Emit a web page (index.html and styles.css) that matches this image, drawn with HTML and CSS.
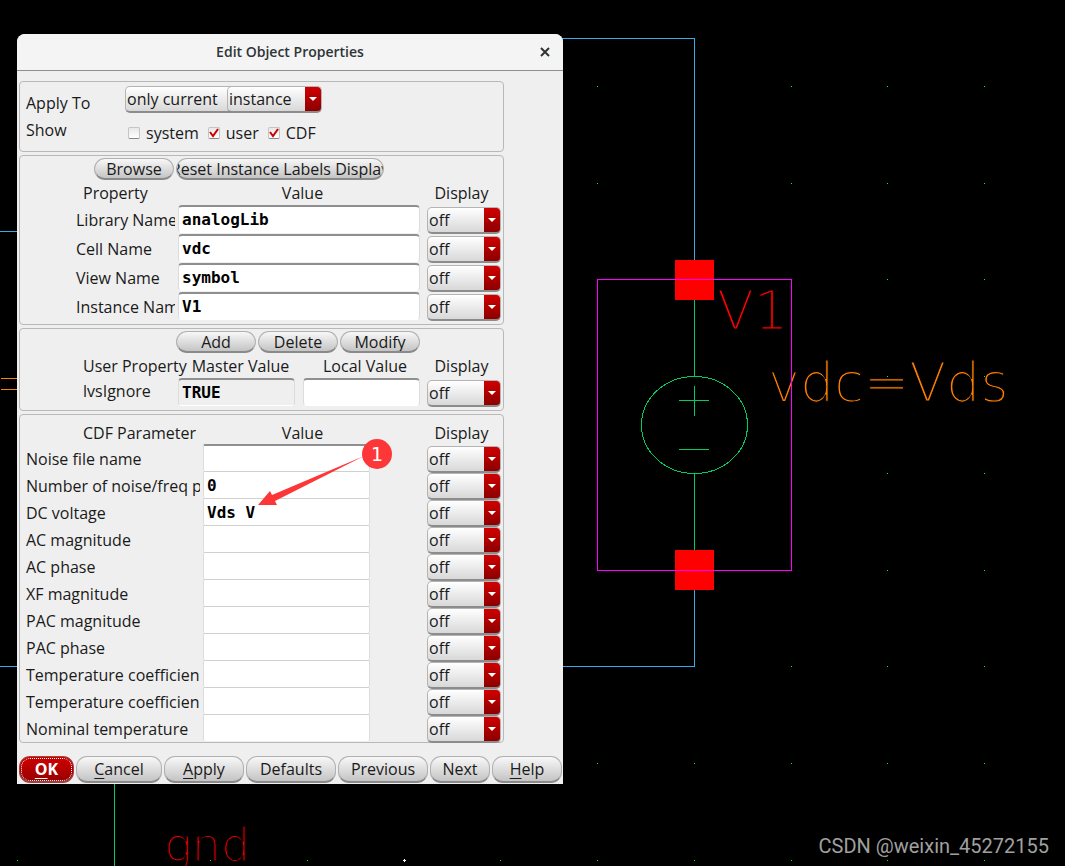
FILE: index.html
```html
<!DOCTYPE html>
<html lang="en">
<head>
    <meta charset="UTF-8">
    <meta name="viewport" content="width=device-width, initial-scale=1.0">
    <title>Edit Object Properties</title>
    <link rel="stylesheet" href="styles.css">
</head>
<body>
<!-- Schematic canvas -->
<svg class="schematic" shape-rendering="crispEdges">
    <defs>
        <g id="dots" class="dot">
            <rect x="597" width="1" height="1"/>
            <rect x="694" width="1" height="1"/>
            <rect x="791" width="1" height="1"/>
            <rect x="887" width="1" height="1"/>
            <rect x="984" width="1" height="1"/>
        </g>
    </defs>
    <text class="net" x="717" y="329">V1</text>
    <text class="net param" x="768" y="401">vdc=Vds</text>
    <text class="net ground" x="164" y="861">gnd</text>

    <use href="#dots" y="86"/>
    <use href="#dots" y="183"/>
    <use href="#dots" y="279"/>
    <use href="#dots" y="376"/>
    <use href="#dots" y="473"/>
    <use href="#dots" y="570"/>
    <use href="#dots" y="666"/>
    <use href="#dots" y="763"/>
    <use href="#dots" y="860"/>
    <g class="dot">
        <rect x="17" y="860" width="1" height="1"/>
        <rect x="210" y="860" width="1" height="1"/>
        <rect x="307" y="860" width="1" height="1"/>
        <rect x="500" y="860" width="1" height="1"/>
    </g>
    <path class="origin" d="M403 860.5h3M404.5 859v3"/>

    <path class="wire" d="M560 38.5H694.5V260M694.5 590V666.5H560M0 231.5H20M0 666.5H20"/>
    <path class="param-line" d="M1 378.5H20M1 389.5H20"/>
    <path class="symbol" d="M114.5 780V866"/>

    <rect class="pin" x="675" y="260" width="39" height="40"/>
    <rect class="pin" x="675" y="550" width="39" height="40"/>
    <path class="symbol" d="M694.5 300V376M694.5 473V550M679 400.5H709M694.5 386V416M679 449.5H709"/>
    <ellipse class="symbol" cx="694.5" cy="425" rx="53" ry="48.5"/>
    <rect class="selection" x="597.5" y="279.5" width="194" height="291"/>
</svg>

<main class="dialog">
    <header class="titlebar">
        <h1>Edit Object Properties</h1>
        <button class="close" type="button" aria-label="Close">
            <svg width="10" height="10" viewBox="0 0 10 10"><path d="M1 1l8 8M9 1l-8 8"/></svg>
        </button>
    </header>

    <form class="content">
        <section class="group apply">
            <label for="applyTo">Apply To</label>
            <div class="scope">
                <select id="applyTo" class="plain"><option>only current</option></select>
                <select class="kind" aria-label="Object kind"><option>instance</option></select>
            </div>
            <span>Show</span>
            <div class="checks">
                <label><input type="checkbox">system</label>
                <label><input type="checkbox" checked>user</label>
                <label><input type="checkbox" checked>CDF</label>
            </div>
        </section>

        <section class="group">
            <div class="tools browse">
                <button type="button"><span>Browse</span></button>
                <button type="button" class="reset"><span>Reset Instance Labels Display</span></button>
            </div>
            <div class="row head"><span>Property</span><span>Value</span><span>Display</span></div>
            <div class="row">
                <label for="lib">Library Name</label>
                <input id="lib" type="text" value="analogLib">
                <select aria-label="Library Name display"><option>off</option></select>
            </div>
            <div class="row">
                <label for="cell">Cell Name</label>
                <input id="cell" type="text" value="vdc">
                <select aria-label="Cell Name display"><option>off</option></select>
            </div>
            <div class="row">
                <label for="view">View Name</label>
                <input id="view" type="text" value="symbol">
                <select aria-label="View Name display"><option>off</option></select>
            </div>
            <div class="row">
                <label for="inst">Instance Name</label>
                <input id="inst" type="text" value="V1">
                <select aria-label="Instance Name display"><option>off</option></select>
            </div>
        </section>

        <section class="group">
            <div class="tools edit">
                <button type="button"><span>Add</span></button>
                <button type="button"><span>Delete</span></button>
                <button type="button"><span>Modify</span></button>
            </div>
            <div class="row user head"><span>User Property</span><span>Master Value</span><span>Local Value</span><span>Display</span></div>
            <div class="row user">
                <label for="lvs">lvsIgnore</label>
                <input id="lvs" type="text" value="TRUE" readonly>
                <input type="text" aria-label="lvsIgnore local value">
                <select aria-label="lvsIgnore display"><option>off</option></select>
            </div>
        </section>

        <section class="group params">
            <div class="row head"><span>CDF Parameter</span><span>Value</span><span>Display</span></div>
            <div class="row cdf">
                <label for="p1">Noise file name</label>
                <input id="p1" type="text">
                <select aria-label="Display"><option>off</option></select>
            </div>
            <div class="row cdf">
                <label for="p2">Number of noise/freq p</label>
                <input id="p2" type="text" value="0">
                <select aria-label="Display"><option>off</option></select>
            </div>
            <div class="row cdf">
                <label for="p3">DC voltage</label>
                <input id="p3" type="text" value="Vds V">
                <select aria-label="Display"><option>off</option></select>
            </div>
            <div class="row cdf">
                <label for="p4">AC magnitude</label>
                <input id="p4" type="text">
                <select aria-label="Display"><option>off</option></select>
            </div>
            <div class="row cdf">
                <label for="p5">AC phase</label>
                <input id="p5" type="text">
                <select aria-label="Display"><option>off</option></select>
            </div>
            <div class="row cdf">
                <label for="p6">XF magnitude</label>
                <input id="p6" type="text">
                <select aria-label="Display"><option>off</option></select>
            </div>
            <div class="row cdf">
                <label for="p7">PAC magnitude</label>
                <input id="p7" type="text">
                <select aria-label="Display"><option>off</option></select>
            </div>
            <div class="row cdf">
                <label for="p8">PAC phase</label>
                <input id="p8" type="text">
                <select aria-label="Display"><option>off</option></select>
            </div>
            <div class="row cdf">
                <label for="p9">Temperature coefficien</label>
                <input id="p9" type="text">
                <select aria-label="Display"><option>off</option></select>
            </div>
            <div class="row cdf">
                <label for="p10">Temperature coefficien</label>
                <input id="p10" type="text">
                <select aria-label="Display"><option>off</option></select>
            </div>
            <div class="row cdf">
                <label for="p11">Nominal temperature</label>
                <input id="p11" type="text">
                <select aria-label="Display"><option>off</option></select>
            </div>
        </section>
    </form>

    <footer class="actions">
        <button type="button" class="ok"><span><u>O</u>K</span></button>
        <button type="button" class="cancel"><span><u>C</u>ancel</span></button>
        <button type="button"><span><u>A</u>pply</span></button>
        <button type="button" class="wide"><span>Defaults</span></button>
        <button type="button" class="wide"><span>Previous</span></button>
        <button type="button" class="next"><span>Next</span></button>
        <button type="button" class="help"><span><u>H</u>elp</span></button>
    </footer>
</main>

<!-- Callout on the DC voltage field -->
<svg class="callout" width="134" height="68" viewBox="258 438 134 68">
    <polygon points="258,505 270,491 272,495 364,456 275,501 277,505"/>
    <circle cx="377" cy="454" r="15"/>
    <text x="377" y="461">1</text>
</svg>

<p class="watermark">CSDN @weixin_45272155</p>
</body>
</html>
```
FILE: styles.css
```css
* {
    box-sizing: border-box;
}

body {
    position: relative;
    min-height: 100vh;
    margin: 0;
    padding: 34px 17px 0;
    background: #000;
    color: #1a1a1a;
    font-family: 'Open Sans', 'Noto Sans', sans-serif;
    font-size: 16px;
    line-height: 22px;
    overflow: hidden;
}

button, select, input {
    font: inherit;
    color: inherit;
    margin: 0;
}

/* Schematic */
.schematic {
    position: absolute;
    top: 0;
    left: 0;
    width: 100%;
    height: 100%;
}

.dot {
    fill: #00ff00;
}

.origin {
    stroke: #fff;
}

.wire, .symbol, .selection, .param-line {
    fill: none;
    stroke-width: 1;
}

.wire {
    stroke: #33aaee;
}

.symbol {
    stroke: #00cc66;
}

.selection {
    stroke: #ff00ff;
}

.param-line {
    stroke: #ff8000;
}

.pin {
    fill: #ff0000;
}

/* background-coloured stroke thins the letters */
.net {
    fill: #ff0000;
    stroke: #000;
    stroke-width: 1px;
    font-family: 'DejaVu Sans Light', 'DejaVu Sans', sans-serif;
    font-size: 54px;
    font-weight: 200;
}

.param {
    fill: #ff8000;
}

.ground {
    font-size: 46px;
}

/* Dialog window */
.dialog {
    position: relative;
    width: fit-content;
    background: #efefef;
    border-radius: 8px 8px 0 0;
    overflow: hidden;
}

.titlebar {
    display: grid;
    grid-template-columns: 36px 1fr 36px;
    align-items: center;
    height: 37px;
    background: #f4f4f4;
    border-bottom: 1px solid #8f8f88;
}

.titlebar h1 {
    grid-column: 2;
    margin: 0;
    font-size: 14px;
    font-weight: 600;
    color: #2e3436;
    text-align: center;
}

.close {
    display: flex;
    justify-content: center;
    padding: 0;
    border: none;
    background: none;
}

.close path {
    stroke: #2e3436;
    stroke-width: 2;
}

/* the button bar sets the window width */
.content {
    contain: inline-size;
    display: flex;
    flex-direction: column;
    gap: 3px;
    padding: 10px 59px 13px 2px;
}

.group {
    padding: 2px 2px 3px 0;
    border: 1px solid #b8b8b8;
    border-radius: 4px;
}

.params {
    padding: 7px 2px 1px 0;
}

.apply {
    display: grid;
    grid-template-columns: 99px 1fr;
    row-gap: 5px;
    padding: 4px 6px 7px;
}

.apply > label {
    padding-top: 6px;
}

.scope, .checks {
    display: flex;
}

.checks {
    gap: 9px;
    padding: 3px 0 0 3px;
}

.checks label {
    display: flex;
    align-items: center;
    gap: 6px;
}

input[type="checkbox"] {
    appearance: none;
    width: 12px;
    height: 12px;
    border: 1px solid #c4c4c4;
    border-bottom-color: #888;
    border-radius: 2px;
    background: linear-gradient(#e8e8e8, #fff);
}

input[type="checkbox"]:checked {
    background: url("data:image/svg+xml,%3Csvg xmlns='http://www.w3.org/2000/svg' viewBox='0 0 10 10'%3E%3Cpath d='M1 4l3 4 5-7' fill='none' stroke='%23cc0000' stroke-width='2'/%3E%3C/svg%3E") center / 10px no-repeat, linear-gradient(#e8e8e8, #fff);
}

select {
    appearance: none;
    width: 74px;
    height: 27px;
    padding: 0 0 0 1px;
    border: 1px solid #b4b4b4;
    border-bottom: 2px solid #8c8c8c;
    border-radius: 5px;
    background:
        url("data:image/svg+xml,%3Csvg xmlns='http://www.w3.org/2000/svg' viewBox='0 0 8 4'%3E%3Cpath d='M0 0h8L4 4z' fill='%23fff'/%3E%3C/svg%3E") right 4px center / 8px 4px no-repeat,
        linear-gradient(#d00000, #8c0000) right / 16px 100% no-repeat,
        linear-gradient(#fff, #d8d8d8);
}

.scope .plain {
    width: 124px;
    background: linear-gradient(#fff, #d8d8d8);
}

.scope .kind {
    width: 95px;
    margin-left: -22px;
}

input[type="text"] {
    min-width: 0;
    height: 28px;
    margin-right: 7px;
    padding: 0 3px;
    border: 1px solid #dcdcdc;
    border-top: 2px solid #8f8f8f;
    border-bottom-color: #fff;
    border-radius: 4px;
    background: #fff;
    color: #000;
    font-family: 'DejaVu Sans Mono', monospace;
    font-weight: bold;
}

input[readonly] {
    background: #efefef;
}

/* Property rows */
.row {
    display: grid;
    grid-template-columns: 158px 1fr 74px;
    height: 29px;
}

.row label {
    margin-right: 3px;
    padding: 4px 0 0 56px;
    white-space: nowrap;
    overflow: hidden;
}

.row select {
    margin-top: 2px;
}

.user {
    grid-template-columns: 158px 125px 1fr 74px;
}

.user label {
    padding: 2px 0 0 63px;
}

.user input[type="text"]:nth-of-type(1) {
    margin-right: 8px;
}

.cdf {
    grid-template-columns: 183px 1fr 74px;
    height: 27px;
}

.cdf label {
    padding: 4px 0 0 6px;
}

.cdf input[type="text"] {
    height: 27px;
    margin-right: 57px;
    border-top: 1px solid #d0d0d0;
    border-bottom: none;
    border-radius: 2px;
}

.head + .cdf input[type="text"] {
    border-top: 2px solid #8f8f8f;
}

.head {
    height: 25px;
    padding-top: 2px;
    text-align: center;
}

.head span {
    white-space: nowrap;
}

.head span:first-child {
    padding-left: 63px;
    text-align: left;
}

.head span:last-child {
    padding-right: 5px;
}

.params .head {
    height: 22px;
    padding-top: 0;
}

/* Push buttons */
.tools {
    display: flex;
    gap: 2px;
}

.browse {
    padding-left: 74px;
}

.edit {
    padding-left: 156px;
}

.tools button, .actions button {
    display: flex;
    align-items: center;
    justify-content: center;
    width: 80px;
    height: 22px;
    padding: 0;
    border: 1px solid #b0b0b0;
    border-bottom: 2px solid #8a8a8a;
    border-radius: 11px;
    background: linear-gradient(#f8f8f8, #c4c4c4);
    white-space: nowrap;
    overflow: hidden;
}

.tools .reset {
    width: 208px;
}

.actions {
    display: flex;
    gap: 2px;
    padding: 0 1px 1px 2px;
}

.actions button {
    height: 27px;
}

.actions .ok {
    width: 55px;
    border-color: #a04040;
    background: linear-gradient(#d00000, #980000);
    color: #fff;
    font-weight: bold;
    outline: 1px dotted #fff;
    outline-offset: -3px;
}

.actions .cancel {
    width: 86px;
}

.actions .wide {
    width: 90px;
}

.actions .next {
    width: 60px;
}

.actions .help {
    width: 70px;
}

.actions u {
    text-underline-offset: 3px;
}

/* Callout and watermark */
.callout {
    position: absolute;
    top: 438px;
    left: 258px;
    fill: #fd3638;
}

.callout text {
    fill: #fff;
    font-family: 'DejaVu Sans', sans-serif;
    font-size: 19px;
    text-anchor: middle;
}

.watermark {
    position: absolute;
    right: 16px;
    bottom: 8px;
    margin: 0;
    color: #a0a0a0;
    font-family: Roboto, sans-serif;
    font-size: 20px;
    line-height: 24px;
}
```
